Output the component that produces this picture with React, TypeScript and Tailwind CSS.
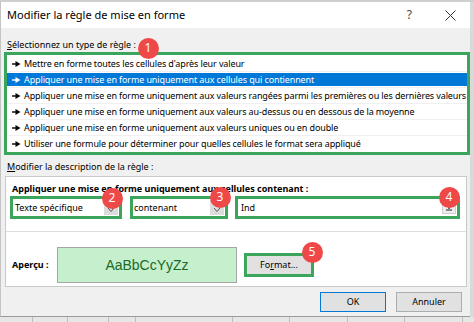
import React from "react";

const font = { fontFamily: '"Noto Sans", "Liberation Sans", sans-serif' };

function Arrow({ white }: { white?: boolean }) {
  return (
    <svg width="9" height="8" viewBox="0 0 9 8" className="shrink-0">
      <rect x="0" y="3.3" width="4" height="1.4" fill={white ? "#fff" : "#000"} />
      <polygon points="3.5,1 8.5,4 3.5,7" fill={white ? "#fff" : "#000"} />
    </svg>
  );
}

function Badge({ n, x, y }: { n: number; x: number; y: number }) {
  return (
    <div
      className="absolute w-[21px] h-[21px] rounded-full bg-[#ef4848] text-white text-[12px] leading-none flex items-center justify-center"
      style={{ left: x - 10.5, top: y - 10.5 }}
    >
      {n}
    </div>
  );
}

const rules = [
  "Mettre en forme toutes les cellules d'après leur valeur",
  "Appliquer une mise en forme uniquement aux cellules qui contiennent",
  "Appliquer une mise en forme uniquement aux valeurs rangées parmi les premières ou les dernières valeurs",
  "Appliquer une mise en forme uniquement aux valeurs au-dessus ou en dessous de la moyenne",
  "Appliquer une mise en forme uniquement aux valeurs uniques ou en double",
  "Utiliser une formule pour déterminer pour quelles cellules le format sera appliqué",
];

function Chevron() {
  return (
    <div className="ml-auto mr-[1px] w-[14px] h-[15px] bg-[#dcdcdc] flex items-end justify-center pb-[3px]">
      <svg width="6" height="4" viewBox="0 0 6 4">
        <path d="M0 0 L3 3.5 L6 0" fill="none" stroke="#555" strokeWidth="1" />
      </svg>
    </div>
  );
}

export default function App() {
  return (
    <div className="relative w-[474px] h-[322px] bg-[#d6d6d6] overflow-hidden text-black text-[9px]" style={font}>
      <div className="h-[2px] bg-[#cfcfcf]" />
      <div className="flex">
        <div className="w-[470px] h-[315px] flex flex-col border-l border-[#c4c4c4] border-b border-b-[#9a9a9a]">
          {/* title bar */}
          <div className="h-[26px] bg-white flex items-center pl-[6px] shrink-0">
            <span className="text-[11px]">Modifier la règle de mise en forme</span>
            <span className="ml-auto text-[12px] text-[#444] mr-[33px]">?</span>
            <svg width="11" height="11" viewBox="0 0 11 11" className="mr-[14px]">
              <path d="M0.5 0.5 L10.5 10.5 M10.5 0.5 L0.5 10.5" stroke="#333" strokeWidth="1" />
            </svg>
          </div>
          {/* body */}
          <div className="flex-1 bg-[#f0f0f0] flex flex-col pt-[10px]">
            <div className="h-[14px] pl-[6px] flex items-center">
              <span>
                <span className="underline">S</span>électionnez un type de règle :
              </span>
            </div>
            <div className="ml-[3px] w-[466px] border-[3px] border-[#3ba55c] bg-white pt-[1px]">
              {rules.map((r, i) => (
                <div key={i} className="h-[16px] flex items-center border-b border-[#f0f0f0] last:border-b-0">
                  <div
                    className={
                      "h-[13px] w-full flex items-center pl-[5px] gap-[3px] whitespace-nowrap overflow-hidden tracking-[-0.12px] " +
                      (i === 1 ? "bg-[#0078d7] text-white" : "")
                    }
                  >
                    <Arrow white={i === 1} />
                    <span>{r}</span>
                  </div>
                </div>
              ))}
            </div>
            <div className="h-[14px] mt-[5px] pl-[6px] flex items-center">
              <span>
                <span className="underline">M</span>odifier la description de la règle :
              </span>
            </div>
            <div className="ml-[4px] mt-[2px] w-[462px] h-[111px] bg-white border border-[#c9c9c9] flex flex-col">
              <div className="pt-[5px] pl-[6px] h-[19px] flex items-center">
                <span className="font-bold">
                  Appliquer une mise en forme uniquement aux cellules contenant :
                </span>
              </div>
              <div className="flex pl-[4px] gap-[8px] h-[23px]">
                <div className="w-[112px] border-[3px] border-[#3ba55c] bg-white flex items-center pl-[2px]">
                  <span>Texte spécifique</span>
                  <Chevron />
                </div>
                <div className="w-[98px] border-[3px] border-[#3ba55c] bg-white flex items-center pl-[1px]">
                  <span>contenant</span>
                  <Chevron />
                </div>
                <div className="ml-[-1px] w-[225px] border-[3px] border-[#3ba55c] bg-white flex items-center pl-[3px]">
                  <span>Ind</span>
                  <div className="ml-auto mr-[1px] w-[14px] h-[13px] bg-[#ececec] border border-[#cfcfcf] flex items-end justify-center pb-[2px]">
                    <svg width="8" height="7" viewBox="0 0 8 7">
                      <path d="M4 0 L4 5 M1 6 L7 6" fill="none" stroke="#222" strokeWidth="1.2" />
                    </svg>
                  </div>
                </div>
              </div>
              <div className="mt-[12px] border-t border-[#dedede] flex-1 flex items-center pl-[6px] pt-[15px] pb-[3px]">
                <span className="font-bold w-[45px]">Aperçu :</span>
                <div className="w-[180px] h-[36px] bg-[#c6efce] border border-[#a6a6a6] flex items-center justify-center">
                  <span className="text-[14px] text-[#1a6a28]" style={{ fontFamily: '"Liberation Sans", Arial, sans-serif' }}>
                    AaBbCcYyZz
                  </span>
                </div>
                <div className="ml-[7px] w-[70px] h-[24px] border-[3px] border-[#3ba55c] bg-[#e1e1e1] flex items-center justify-center">
                  <span>
                    Fo<span className="underline">r</span>mat...
                  </span>
                </div>
              </div>
            </div>
            <div className="flex justify-end gap-[10px] pr-[8px] mt-[5px]">
              <div className="w-[66px] h-[20px] bg-[#e1e1e1] border border-[#0078d7] flex items-center justify-center">
                OK
              </div>
              <div className="w-[66px] h-[20px] bg-[#e1e1e1] border border-[#adadad] flex items-center justify-center">
                Annuler
              </div>
            </div>
          </div>
        </div>
        <div className="flex-1 bg-[#d9d9d9]" />
      </div>
      <div className="h-[5px] bg-[#e6e6e6] flex">
        {[33, 35, 41, 27, 97, 57, 58, 57, 58].map((w, i) => (
          <div key={i} className="h-full border-r border-[#bdbdbd]" style={{ width: w }} />
        ))}
      </div>
      <Badge n={1} x={148} y={48} />
      <Badge n={2} x={112} y={198} />
      <Badge n={3} x={220} y={197} />
      <Badge n={4} x={449} y={197} />
      <Badge n={5} x={312} y={252} />
    </div>
  );
}
